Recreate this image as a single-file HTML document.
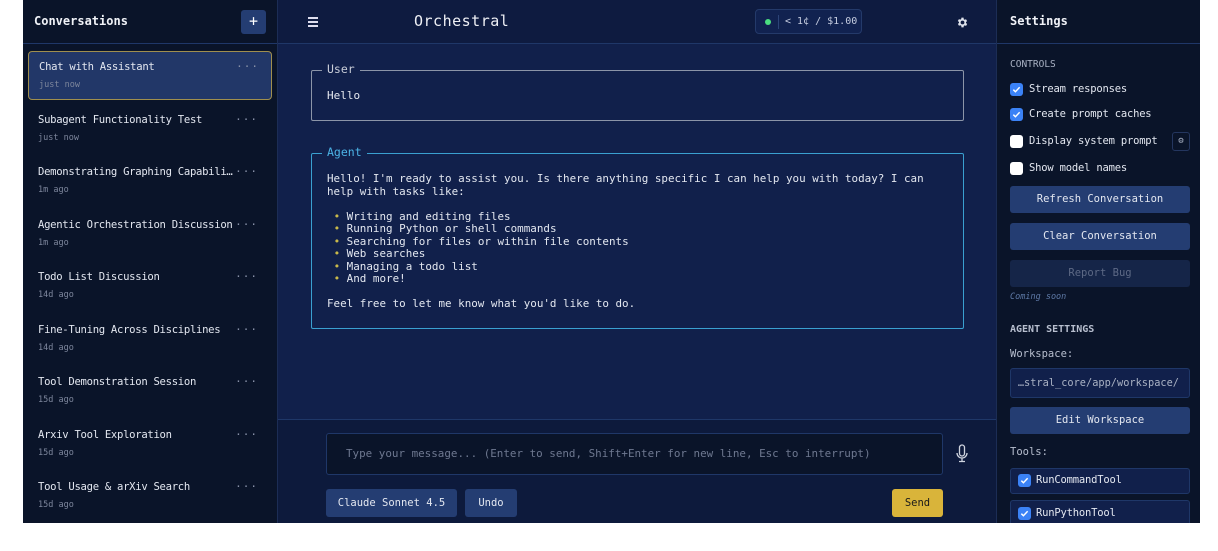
<!DOCTYPE html>
<html><head><meta charset="utf-8"><style>
*{box-sizing:border-box;margin:0;padding:0}
body{width:1218px;height:551px;background:#fff;position:relative;overflow:hidden;font-family:"DejaVu Sans Mono","Liberation Mono",monospace;color:#e6e9f0}
.abs{position:absolute}
#left{left:23px;top:0;width:255px;height:523px;background:#0a1429;border-right:1px solid #1c2d55}
#main{left:278px;top:0;width:718px;height:523px;background:#11204b}
#right{left:996px;top:0;width:204px;height:523px;background:#0a1429;border-left:1px solid #1c2d55}
.hdr{position:absolute;left:0;top:0;right:0;height:44px;border-bottom:1px solid #1f3768}
.conv{position:absolute;left:5px;width:244px;height:49px;border-radius:4px}
.conv .t{position:absolute;left:10px;top:10px;font-size:10.6px;letter-spacing:-0.3px;color:#e3e7f0;white-space:nowrap;max-width:200px;overflow:hidden}
.conv .d{position:absolute;left:10px;top:29px;font-size:8.5px;color:#7d869c}
.conv .m{position:absolute;right:14px;top:9px;font-size:11px;color:#8891a8;letter-spacing:1px}
.fs{position:absolute;border:1.5px solid #8c95a8;border-radius:2px}
.fs .lg{position:absolute;top:-9px;left:10px;background:#11204b;padding:0 5px;font-size:11.5px}
.btn{position:absolute;background:#243d72;border-radius:3px;font-size:10.5px;color:#e3e7f0;text-align:center}
.cb{position:absolute;left:13px;width:13px;height:13px;border-radius:3px;background:#3b82f6}
.cb.off{background:#fff}
.cb svg{position:absolute;left:2px;top:2px}
.lbl{position:absolute;left:32px;font-size:10.5px;letter-spacing:-0.2px;color:#e3e7f0}
</style></head><body>
<div id="left" class="abs">
 <div class="hdr" style="border-bottom-color:#1f3768">
  <div class="abs" style="left:11px;top:14px;font-size:12px;font-weight:bold;color:#f0f2f7">Conversations</div>
  <div class="abs" style="left:218px;top:10px;width:25px;height:24px;background:#243d72;border-radius:3px;color:#fff;text-align:center;line-height:23px;font-size:15px">+</div>
 </div>
 <div class="conv" style="top:51px;background:#223768;border:1.5px solid #a08f4e"><div class="t" style="top:9px">Chat with Assistant</div><div class="d" style="top:28px">just now</div><div class="m" style="top:8px;right:12px">···</div></div>
 <div class="conv" style="top:104px"><div class="t">Subagent Functionality Test</div><div class="d">just now</div><div class="m">···</div></div>
 <div class="conv" style="top:156px"><div class="t">Demonstrating Graphing Capabili…</div><div class="d">1m ago</div><div class="m">···</div></div>
 <div class="conv" style="top:209px"><div class="t">Agentic Orchestration Discussion</div><div class="d">1m ago</div><div class="m">···</div></div>
 <div class="conv" style="top:261px"><div class="t">Todo List Discussion</div><div class="d">14d ago</div><div class="m">···</div></div>
 <div class="conv" style="top:314px"><div class="t">Fine-Tuning Across Disciplines</div><div class="d">14d ago</div><div class="m">···</div></div>
 <div class="conv" style="top:366px"><div class="t">Tool Demonstration Session</div><div class="d">15d ago</div><div class="m">···</div></div>
 <div class="conv" style="top:419px"><div class="t">Arxiv Tool Exploration</div><div class="d">15d ago</div><div class="m">···</div></div>
 <div class="conv" style="top:471px"><div class="t">Tool Usage &amp; arXiv Search</div><div class="d">15d ago</div><div class="m">···</div></div>
</div>
<div id="main" class="abs">
 <div class="hdr" style="background:#0e1b40">
  <div class="abs" style="left:30px;top:17px;width:10px"><div style="height:1.6px;background:#dde;margin-bottom:2.4px"></div><div style="height:1.6px;background:#dde;margin-bottom:2.4px"></div><div style="height:1.6px;background:#dde"></div></div>
  <div class="abs" style="left:136px;top:12px;font-size:15px;color:#eef0f5;letter-spacing:0.5px">Orchestral</div>
  <div class="abs" style="left:477px;top:9px;width:107px;height:25px;border:1px solid #243a6a;border-radius:4px;background:#112250">
   <div class="abs" style="left:9px;top:9px;width:6px;height:6px;border-radius:50%;background:#4ade80"></div>
   <div class="abs" style="left:22px;top:5px;width:1px;height:14px;background:#2c4478"></div>
   <div class="abs" style="left:29px;top:6px;font-size:10px;color:#c6cde0">&lt; 1¢ / $1.00</div>
  </div>
  <svg class="abs" style="left:678px;top:16px" width="13" height="13" viewBox="0 0 24 24"><path fill="#dfe3ec" d="M19.4 13a7.5 7.5 0 0 0 0-2l2.1-1.6-2-3.5-2.5 1a7.6 7.6 0 0 0-1.7-1L15 3h-4l-.4 2.8a7.6 7.6 0 0 0-1.7 1l-2.5-1-2 3.5L6.6 11a7.5 7.5 0 0 0 0 2l-2.1 1.6 2 3.5 2.5-1a7.6 7.6 0 0 0 1.7 1L11 21h4l.4-2.8a7.6 7.6 0 0 0 1.7-1l2.5 1 2-3.5zM13 15.5a3.5 3.5 0 1 1 0-7 3.5 3.5 0 0 1 0 7z" transform="translate(-1 0)"/></svg>
 </div>
 <div class="fs" style="left:33px;top:70px;width:653px;height:51px"><div class="lg" style="color:#c9cdd8">User</div><div class="abs" style="left:15px;top:18px;font-size:11px">Hello</div></div>
 <div class="fs" style="left:33px;top:153px;width:653px;height:176px;border-color:#3aa0d0"><div class="lg" style="color:#4cb3e6">Agent</div>
  <div class="abs" style="left:15px;top:19px;font-size:10.9px;line-height:12.55px;white-space:pre;color:#e3e7f0">Hello! I'm ready to assist you. Is there anything specific I can help you with today? I can
help with tasks like:

 <span style="color:#c9b94a">•</span> Writing and editing files
 <span style="color:#c9b94a">•</span> Running Python or shell commands
 <span style="color:#c9b94a">•</span> Searching for files or within file contents
 <span style="color:#c9b94a">•</span> Web searches
 <span style="color:#c9b94a">•</span> Managing a todo list
 <span style="color:#c9b94a">•</span> And more!

Feel free to let me know what you'd like to do.</div></div>
 <div class="abs" style="left:0;top:419px;width:718px;height:104px;background:#0d1a3c;border-top:1px solid #1f3768">
  <div class="abs" style="left:48px;top:13px;width:617px;height:42px;background:#0a1429;border:1px solid #1f3768;border-radius:3px"><div class="abs" style="left:19px;top:13px;font-size:10.9px;color:#6e7890;white-space:nowrap">Type your message... (Enter to send, Shift+Enter for new line, Esc to interrupt)</div></div>
  <svg class="abs" style="left:677px;top:24px" width="14" height="20" viewBox="0 0 14 20"><rect x="4.5" y="1" width="5" height="11" rx="2.5" fill="none" stroke="#cfd4df" stroke-width="1.3"/><path d="M2 9a5 5 0 0 0 10 0M7 14v3M4 17.5h6" fill="none" stroke="#cfd4df" stroke-width="1.3"/></svg>
  <div class="btn" style="left:48px;top:69px;width:131px;height:28px;line-height:28px">Claude Sonnet 4.5</div>
  <div class="btn" style="left:187px;top:69px;width:52px;height:28px;line-height:28px">Undo</div>
  <div class="btn" style="left:614px;top:69px;width:51px;height:28px;line-height:28px;background:#d9b43a;color:#1a1a1a">Send</div>
 </div>
</div>
<div id="right" class="abs">
 <div class="hdr"><div class="abs" style="left:13px;top:14px;font-size:12px;font-weight:bold;color:#f0f2f7">Settings</div></div>
 <div class="abs" style="left:13px;top:59px;font-size:9.5px;color:#aab2c4">CONTROLS</div>
 <div class="cb" style="top:83px"><svg width="9" height="9" viewBox="0 0 10 10"><path d="M1.5 5.2l2.3 2.3 4.7-5" fill="none" stroke="#fff" stroke-width="1.6"/></svg></div><div class="lbl" style="top:83px">Stream responses</div>
 <div class="cb" style="top:108px"><svg width="9" height="9" viewBox="0 0 10 10"><path d="M1.5 5.2l2.3 2.3 4.7-5" fill="none" stroke="#fff" stroke-width="1.6"/></svg></div><div class="lbl" style="top:108px">Create prompt caches</div>
 <div class="cb off" style="top:135px"></div><div class="lbl" style="top:135px">Display system prompt</div>
 <div class="abs" style="left:175px;top:132px;width:18px;height:19px;border:1px solid #24365f;border-radius:3px;font-size:9px;color:#aab2c4;text-align:center;line-height:17px">⚙</div>
 <div class="cb off" style="top:162px"></div><div class="lbl" style="top:162px">Show model names</div>
 <div class="btn" style="left:13px;top:186px;width:180px;height:27px;line-height:27px">Refresh Conversation</div>
 <div class="btn" style="left:13px;top:223px;width:180px;height:27px;line-height:27px">Clear Conversation</div>
 <div class="btn" style="left:13px;top:260px;width:180px;height:27px;line-height:27px;background:#152548;color:#5d6985">Report Bug</div>
 <div class="abs" style="left:13px;top:292px;font-size:8.5px;font-style:italic;color:#5e79a6">Coming soon</div>
 <div class="abs" style="left:13px;top:324px;font-size:10px;font-weight:bold;color:#b8bfcf">AGENT SETTINGS</div>
 <div class="abs" style="left:13px;top:348px;font-size:10.5px;color:#b8bfcf">Workspace:</div>
 <div class="abs" style="left:13px;top:368px;width:180px;height:30px;background:#11204b;border:1px solid #1f3768;border-radius:3px;font-size:10.3px;color:#aab2c4;text-align:right;padding:8px 10px 0 0;white-space:nowrap;overflow:hidden">…stral_core/app/workspace/</div>
 <div class="btn" style="left:13px;top:407px;width:180px;height:27px;line-height:27px">Edit Workspace</div>
 <div class="abs" style="left:13px;top:446px;font-size:10.5px;color:#b8bfcf">Tools:</div>
 <div class="abs" style="left:13px;top:468px;width:180px;height:26px;background:#11204b;border:1px solid #1f3768;border-radius:3px"></div>
 <div class="cb" style="left:21px;top:474px"><svg width="9" height="9" viewBox="0 0 10 10"><path d="M1.5 5.2l2.3 2.3 4.7-5" fill="none" stroke="#fff" stroke-width="1.6"/></svg></div><div class="lbl" style="left:39px;top:474px">RunCommandTool</div>
 <div class="abs" style="left:13px;top:500px;width:180px;height:26px;background:#11204b;border:1px solid #1f3768;border-radius:3px"></div>
 <div class="cb" style="left:21px;top:507px"><svg width="9" height="9" viewBox="0 0 10 10"><path d="M1.5 5.2l2.3 2.3 4.7-5" fill="none" stroke="#fff" stroke-width="1.6"/></svg></div><div class="lbl" style="left:39px;top:507px">RunPythonTool</div>
</div>
<div class="abs" style="left:0;top:523px;width:1218px;height:28px;background:#fff"></div>
</body></html>
